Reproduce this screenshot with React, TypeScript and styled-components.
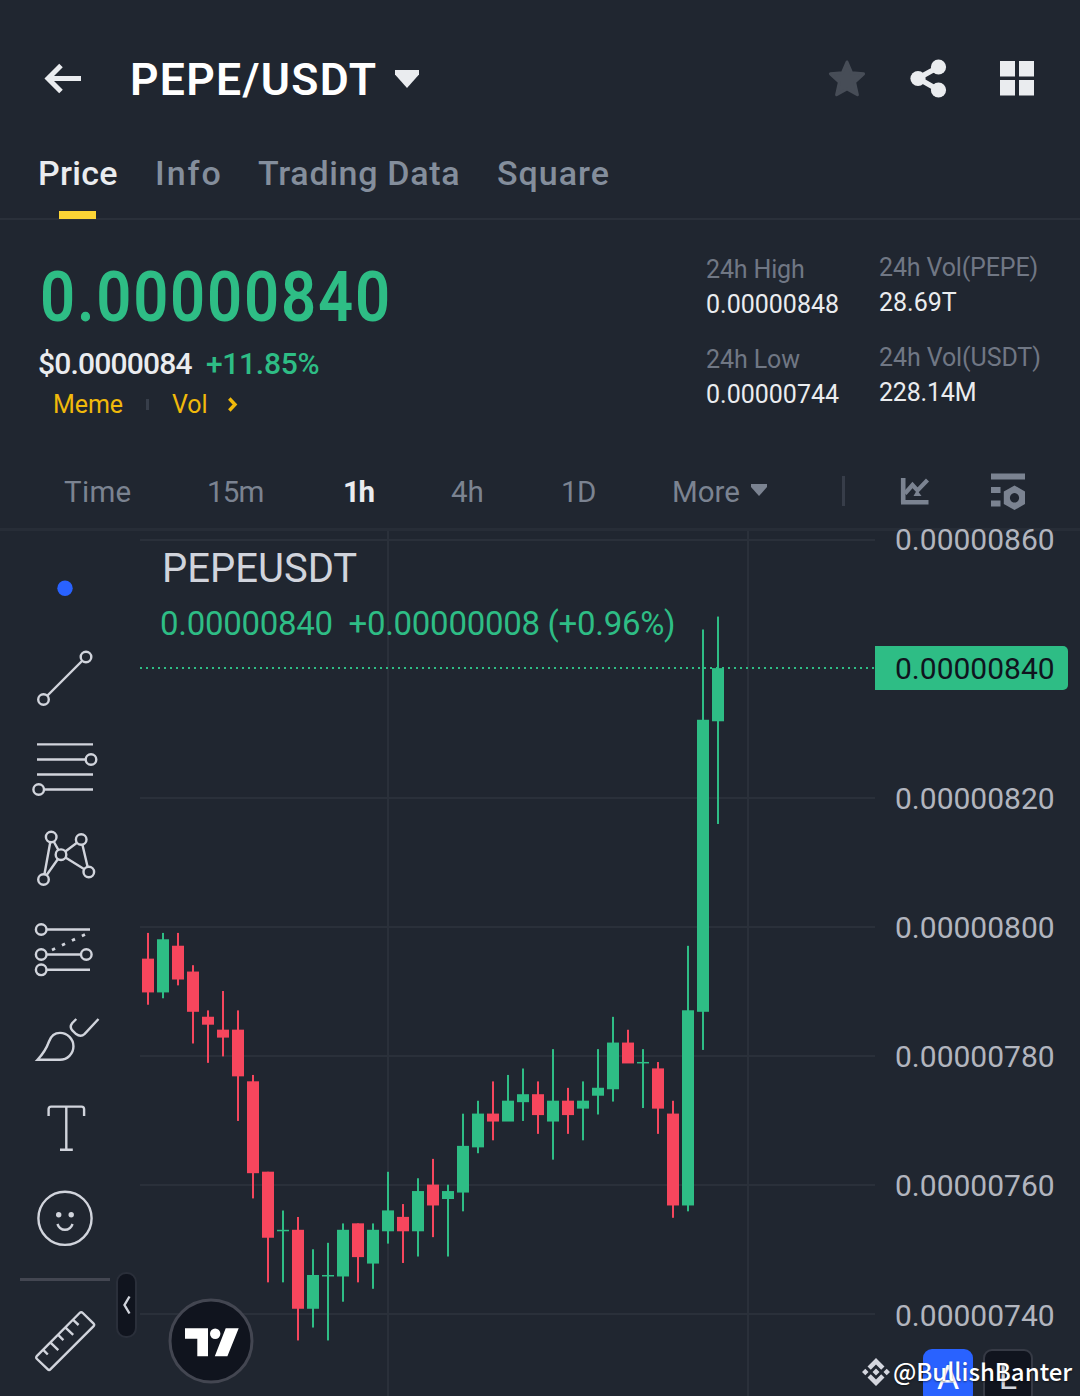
import React from "react";
import styled, { createGlobalStyle, css } from "styled-components";

const color = {
  bg: "#202630",
  text: "#eaecef",
  muted: "#7b8391",
  green: "#2ebd85",
  red: "#f6465d",
  yellow: "#f0b90b",
  line: "#2a303a",
  tool: "#d1d4dc",
};

const Global = createGlobalStyle`
  * { box-sizing: border-box; }
  body { margin: 0; background: ${color.bg}; overflow: hidden; }
`;

const Screen = styled.main`
  position: relative;
  width: 1080px;
  height: 1396px;
  overflow: hidden;
  background: ${color.bg};
  color: ${color.text};
  font-family: Roboto, "Liberation Sans", sans-serif;
  display: flex;
  flex-direction: column;
`;

type TextProps = {
  $size: number;
  $weight?: number;
  $color?: string;
  $spacing?: number;
  $stretch?: number;
};

const Text = styled.span<TextProps>`
  display: inline-block;
  white-space: pre;
  line-height: 1;
  transform-origin: 0 50%;
  font-size: ${(p) => p.$size}px;
  font-weight: ${(p) => p.$weight ?? 400};
  color: ${(p) => p.$color ?? color.text};
  letter-spacing: ${(p) => p.$spacing ?? 0}px;
  ${(p) => p.$stretch && css`transform: scaleX(${p.$stretch});`}
`;

const Header = styled.header`
  height: 131px;
  padding: 26px 45px 0 44px;
  display: flex;
  align-items: center;
`;

const Pair = styled.div`
  display: flex;
  width: 265px;
  padding-top: 3px;
  margin-left: 48px;
`;

const Actions = styled.div`
  display: flex;
  align-items: center;
  gap: 44px;
  margin-left: auto;
`;

const Tabs = styled.nav`
  height: 89px;
  padding-left: 38px;
  border-bottom: 2px solid ${color.line};
  display: grid;
  grid-template-columns: 117px 103px 239px 140px;
`;

const Tab = styled.div`
  position: relative;
  height: 87px;
  padding-bottom: 4px;
  display: flex;
  align-items: center;
`;

const Underline = styled.i`
  position: absolute;
  left: 21px;
  bottom: -1px;
  width: 37px;
  height: 8px;
  background: #fcd535;
`;

const Summary = styled.section`
  height: 235px;
  display: grid;
  grid-template-columns: 706px 173px 1fr;
`;

const Quote = styled.div`
  padding: 37px 0 0 38px;
`;

const BigPrice = styled.div`
  height: 80px;
  padding-left: 2px;
  display: flex;
  align-items: center;
`;

const SubPrice = styled.div`
  height: 54px;
  display: grid;
  grid-template-columns: 168px auto;
  align-items: center;
`;

const Tags = styled.div`
  height: 26px;
  padding-left: 15px;
  display: flex;
  align-items: center;
`;

const TagCell = styled.div<{ $width: number }>`
  width: ${(p) => p.$width}px;
  display: flex;
`;

const TagRule = styled.i`
  width: 3px;
  height: 11px;
  margin-right: 23px;
  background: #373e4a;
`;

const Stats = styled.div<{ $top: number }>`
  padding-top: ${(p) => p.$top}px;
`;

const Stat = styled.div`
  height: 90px;
`;

const StatLine = styled.div`
  height: 35px;
  display: flex;
  align-items: center;
`;

const Intervals = styled.nav`
  height: 76px;
  padding-left: 64px;
  display: grid;
  grid-template-columns: 143px 136px 108px 110px 111px 170px 58px 90px auto;
  align-items: center;
  border-bottom: 3px solid #272d37;
`;

const Interval = styled.div`
  padding-top: 3px;
  display: flex;
  align-items: center;
`;

const Caret = styled.svg`
  margin-left: 11px;
  margin-top: -6px;
`;

const Rule = styled.i`
  width: 3px;
  height: 30px;
  margin-top: -1px;
  background: #373d49;
`;

const Workspace = styled.section`
  position: relative;
  height: 865px;
  display: grid;
  grid-template-columns: 140px 735px 205px;
`;

const Toolbar = styled.aside`
  padding-top: 12px;
  display: flex;
  flex-direction: column;
`;

const ToolIcon = styled.svg`
  display: block;
  width: 130px;
  height: 90px;
  flex: none;
  fill: none;
  stroke: ${color.tool};
  stroke-width: 2.4;
`;

const ToolRule = styled.i`
  width: 90px;
  height: 3px;
  flex: none;
  margin: 15px 0 15px 20px;
  background: #434651;
`;

const CollapseHandle = styled.div`
  position: absolute;
  left: 116px;
  top: 741px;
  width: 21px;
  height: 66px;
  border: 2px solid #2a2f3a;
  border-radius: 10px;
  background: #10141e;
  display: grid;
  place-items: center;
`;

const Pane = styled.div`
  position: relative;
  height: 865px;
`;

const Plot = styled.svg`
  display: block;
`;

const Legend = styled.div`
  position: absolute;
  left: 20px;
  top: 11px;
`;

const LegendLine = styled.div<{ $indent?: number }>`
  height: 54.5px;
  padding-left: ${(p) => p.$indent ?? 0}px;
  display: flex;
  align-items: center;
`;

const Brand = styled.svg`
  position: absolute;
  left: 28px;
  top: 767px;
`;

const Axis = styled.div`
  display: flex;
  flex-direction: column;
`;

const AxisRow = styled.div`
  flex: none;
  height: 129.2px;
  display: flex;
  align-items: flex-start;
`;

const AxisLabel = styled.div<{ $current?: boolean }>`
  width: 193px;
  height: 44px;
  margin-top: ${(p) => (p.$current ? -14 : -12.6)}px;
  padding: ${(p) => (p.$current ? 1 : 0)}px 0 0 20px;
  display: flex;
  align-items: center;
  border-radius: 0 5px 5px 0;
  background: ${(p) => (p.$current ? color.green : "transparent")};
`;

const ScaleButton = styled.div<{ $x: number; $active?: boolean }>`
  position: absolute;
  left: ${(p) => p.$x}px;
  top: 818px;
  width: 50px;
  height: 54px;
  border-radius: 9px;
  border: ${(p) => (p.$active ? "0" : "2px solid #363a45")};
  background: ${(p) => (p.$active ? "#2962ff" : "#10141e")};
  display: flex;
  justify-content: center;
  padding-top: ${(p) => (p.$active ? 11 : 9)}px;
`;

const Watermark = styled.div`
  position: absolute;
  left: 862px;
  top: 1353px;
  height: 38px;
  display: flex;
  align-items: center;
  gap: 3px;
  color: #fff;
  white-space: nowrap;
  font: 500 24px/36px "Noto Sans CJK SC", "Noto Sans", sans-serif;
  text-shadow: 0 1px 2px rgba(0, 0, 0, 0.5);
`;

const Handle = styled.span`
  height: 38px;
  line-height: 36px;
`;

/* One row per hour: high, upper body, lower body, low, rising. */
const candles: [number, number, number, number, number][] = [
  [799, 795, 790, 788, 0], [799, 798, 790, 789, 1], [799, 797, 792, 791, 0],
  [794, 793, 787, 782, 0], [787, 786, 785, 779, 0], [790, 784, 783, 780, 0],
  [787, 784, 777, 770, 0], [777, 776, 762, 758, 0], [762, 762, 752, 745, 0],
  [756, 753, 753, 745, 1], [755, 753, 741, 736, 0], [750, 746, 741, 738, 1],
  [751, 746, 746, 736, 1], [754, 753, 746, 742, 1], [754, 754, 749, 745, 0],
  [754, 753, 748, 744, 1], [762, 756, 753, 751, 1], [757, 755, 753, 748, 0],
  [761, 759, 753, 749, 1], [764, 760, 757, 752, 0], [760, 759, 758, 749, 1],
  [771, 766, 759, 756, 1], [773, 771, 766, 765, 1], [776, 771, 770, 767, 0],
  [777, 773, 770, 770, 1], [778, 774, 773, 770, 1], [776, 774, 771, 768, 0],
  [781, 773, 770, 764, 1], [775, 773, 771, 768, 0], [776, 773, 772, 767, 1],
  [781, 775, 774, 771, 1], [786, 782, 775, 773, 1], [784, 782, 779, 779, 0],
  [781, 779, 779, 772, 1], [779, 778, 772, 768, 0], [773, 771, 757, 755, 0],
  [797, 787, 757, 756, 1], [846, 832, 787, 781, 1], [848, 840, 832, 816, 1],
];

const yOf = (p: number) => 8.5 + (860 - p) * 6.456;

function Chart() {
  return (
    <Plot width="735" height="865">
      {[860, 820, 800, 780, 760, 740].map((p) => (
        <rect key={p} x="0" y={Math.round(yOf(p)) - 1} width="735" height="2" fill={color.line} />
      ))}
      {[247, 607].map((x) => (
        <rect key={x} x={x} y="0" width="2" height="865" fill={color.line} />
      ))}
      <line x1="0" x2="735" y1="137" y2="137" stroke={color.green} strokeWidth="2" strokeDasharray="2 4" />
      {candles.map(([h, t, b, l, up], i) => {
        const x = 8 + i * 15;
        const top = yOf(t) - 0.5;
        return (
          <g key={i} fill={up ? color.green : color.red}>
            <rect x={x - 1} y={yOf(h) - 0.4} width="2" height={yOf(l) - yOf(h) + 0.8} />
            <rect x={x - 6} y={top} width="12" height={yOf(b) + 1 - top} />
          </g>
        );
      })}
    </Plot>
  );
}

function Ring({ x, y }: { x: number; y: number }) {
  return <circle cx={x} cy={y} r="5.3" fill={color.bg} />;
}

function Tools() {
  return (
    <Toolbar>
      <ToolIcon viewBox="0 0 130 90">
        <circle cx="65" cy="45.3" r="7.7" fill="#2962ff" stroke="none" />
      </ToolIcon>
      <ToolIcon viewBox="0 0 130 90">
        <path d="M43.5 66.5 86 24" />
        <Ring x={43.5} y={66.5} />
        <Ring x={86} y={24} />
      </ToolIcon>
      <ToolIcon viewBox="0 0 130 90">
        <path d="M37 21.4h56M37 36.5h54M37 51.5h56M39 66.5h54" />
        <Ring x={91} y={36.5} />
        <Ring x={38.7} y={66.5} />
      </ToolIcon>
      <ToolIcon viewBox="0 0 130 90">
        <path d="M51.2 24 43.5 66.5 61 41.7 51.2 24M61 41.7 81.2 26.5 88.8 59 61 41.7" />
        <Ring x={51.2} y={24} />
        <Ring x={81.2} y={26.5} />
        <Ring x={61} y={41.7} />
        <Ring x={43.5} y={66.5} />
        <Ring x={88.8} y={59} />
      </ToolIcon>
      <ToolIcon viewBox="0 0 130 90">
        <path d="M41 26.5h49M41 51.5h45M41 66.8h49" />
        <path d="M52 46.9 86 31" strokeDasharray="3.4 7.6" strokeWidth="2.8" />
        <Ring x={41.2} y={26.5} />
        <Ring x={41.2} y={51.5} />
        <Ring x={86.3} y={51.5} />
        <Ring x={41.2} y={66.8} />
      </ToolIcon>
      <ToolIcon viewBox="0 0 130 90">
        <path d="M37.5 66.8H60A13.4 13.4 0 0 0 60 39.9C53.5 39.9 50.8 43.5 49 48.5 46.5 55.5 41.5 62.5 37.5 66.8Z" />
        <path d="m76.3 26-4.2 4.2q-2.8 3.6.2 7.2l3.8 3.6q4.6 3.5 8.6-.2L98.5 26" />
      </ToolIcon>
      <ToolIcon viewBox="0 0 130 90">
        <path d="M48.6 33v-6.8q0-2.6 2.6-2.6h30.3q2.6 0 2.6 2.6V33M66.3 23.6v43M60 66.7h12.8" />
      </ToolIcon>
      <ToolIcon viewBox="0 0 130 90">
        <circle cx="65" cy="45.3" r="26.6" />
        <path d="M57.4 51q2.2 5.8 7.6 5.8t7.6-5.8" />
        <circle cx="58.7" cy="41.7" r="2.7" fill={color.tool} stroke="none" />
        <circle cx="71.2" cy="41.7" r="2.7" fill={color.tool} stroke="none" />
      </ToolIcon>
      <ToolRule />
      <ToolIcon viewBox="0 0 130 90">
        <path
          strokeLinejoin="round"
          d="M79.6 17q1.6-1.6 3.2 0l10.6 10.4q1.5 1.5 0 3L50.6 73.2q-1.5 1.5-3 0L37 63q-1.6-1.5 0-3.2ZM43.5 54.2l4.3 4.3M50.8 46.8l7.5 7.4M58.4 39.2l5 4.9M65.8 31.8l7.4 7M73.4 24.2l5.2 4.8"
        />
      </ToolIcon>
    </Toolbar>
  );
}

const levels = [860, 840, 820, 800, 780, 760, 740];

const Down = ({ w, h, fill }: { w: number; h: number; fill: string }) => (
  <svg width={w} height={h} viewBox="0 0 24 18" preserveAspectRatio="none">
    <path d="M0 0h24v4.6L12 18 0 4.6Z" fill={fill} />
  </svg>
);

const label = "#707784";

export default function App() {
  return (
    <Screen>
      <Global />
      <Header>
        <svg width="38" height="32" viewBox="0 0 38 32" fill="none" stroke={color.text}>
          <path d="M3.5 15.5H37" strokeWidth="5" />
          <path d="M17 2.6 4 15.5 17 28.6" strokeWidth="5" />
        </svg>
        <Pair>
          <Text $size={44.5} $weight={600} $color="#fff" $spacing={1.3}>PEPE/USDT</Text>
        </Pair>
        <Down w={24} h={18} fill={color.text} />
        <Actions>
          <svg width="38" height="39" viewBox="0 0 38 39">
            <path
              d="M19 3l4.6 10.8 12 1-9 8.4 2.8 12.6L19 30 8.600 35.800l2.800-12.600-9-8.400 12-1Z"
              fill="#474d57" stroke="#474d57" strokeWidth="3" strokeLinejoin="round"
            />
          </svg>
          <svg width="37" height="39" viewBox="0 0 37 39" fill={color.text}>
            <path d="M28.500 8 8 19.300l20.500 11.700" fill="none" stroke={color.text} strokeWidth="5.400" />
            <circle cx="28.500" cy="8" r="7.600" />
            <circle cx="8" cy="19.500" r="7.600" />
            <circle cx="28.500" cy="31" r="7.600" />
          </svg>
          <svg width="44" height="35" viewBox="-9 0 44 35" fill={color.text}>
            <path d="M0 0h15v15.500H0zM19 0h15v15.500H19zM0 19h15v15.500H0zM19 19h15v15.500H19z" />
          </svg>
        </Actions>
      </Header>

      <Tabs>
        <Tab>
          <Text $size={34} $weight={500} $spacing={0.3}>Price</Text>
          <Underline />
        </Tab>
        <Tab><Text $size={34} $weight={500} $color="#848e9c" $spacing={2}>Info</Text></Tab>
        <Tab><Text $size={34} $weight={500} $color="#848e9c" $spacing={0.7}>Trading Data</Text></Tab>
        <Tab><Text $size={34} $weight={500} $color="#848e9c" $spacing={1}>Square</Text></Tab>
      </Tabs>

      <Summary>
        <Quote>
          <BigPrice>
            <Text $size={70} $weight={600} $color={color.green} $spacing={2} $stretch={0.88}>0.00000840</Text>
          </BigPrice>
          <SubPrice>
            <Text $size={30} $weight={500} $spacing={-0.8}>$0.0000084</Text>
            <Text $size={30} $weight={500} $color={color.green} $spacing={-0.3}>+11.85%</Text>
          </SubPrice>
          <Tags>
            <TagCell $width={93}><Text $size={25} $color={color.yellow} $spacing={-0.1}>Meme</Text></TagCell>
            <TagRule />
            <TagCell $width={56}><Text $size={25} $color={color.yellow}>Vol</Text></TagCell>
            <svg width="10" height="15" viewBox="0 0 10 15" fill="none" stroke={color.yellow} strokeWidth="3.400">
              <path d="m1.300 1.500 5.700 6-5.700 6" />
            </svg>
          </Tags>
        </Quote>
        <Stats $top={32}>
          <Stat>
            <StatLine><Text $size={25} $color={label} $spacing={-0.15}>24h High</Text></StatLine>
            <StatLine><Text $size={25}>0.00000848</Text></StatLine>
          </Stat>
          <Stat>
            <StatLine><Text $size={25} $color={label} $spacing={-0.1}>24h Low</Text></StatLine>
            <StatLine><Text $size={25}>0.00000744</Text></StatLine>
          </Stat>
        </Stats>
        <Stats $top={30}>
          <Stat>
            <StatLine><Text $size={25} $color={label} $spacing={-0.15}>24h Vol(PEPE)</Text></StatLine>
            <StatLine><Text $size={25}>28.69T</Text></StatLine>
          </Stat>
          <Stat>
            <StatLine><Text $size={25} $color={label} $spacing={-0.1}>24h Vol(USDT)</Text></StatLine>
            <StatLine><Text $size={25} $spacing={-0.2}>228.14M</Text></StatLine>
          </Stat>
        </Stats>
      </Summary>

      <Intervals>
        <Interval><Text $size={29.5} $color={color.muted} $spacing={0.3}>Time</Text></Interval>
        <Interval><Text $size={29.5} $color={color.muted} $spacing={-0.8}>15m</Text></Interval>
        <Interval><Text $size={29.5} $weight={700} $spacing={-1.5}>1h</Text></Interval>
        <Interval><Text $size={29.5} $color={color.muted}>4h</Text></Interval>
        <Interval><Text $size={29.5} $color={color.muted} $spacing={-0.6}>1D</Text></Interval>
        <Interval>
          <Text $size={29.5} $color={color.muted}>More</Text>
          <Caret width="16" height="12" viewBox="0 0 24 18" preserveAspectRatio="none">
            <path d="M0 0h24v4.600L12 18 0 4.600Z" fill={color.muted} />
          </Caret>
        </Interval>
        <Rule />
        <svg width="30" height="30" viewBox="0 0 30 30" fill="none" stroke={color.muted}>
          <path d="M3.200 1v24.600M1 25.200h27.500" strokeWidth="4.600" />
          <path d="M5 16.500 12.500 8l5 5.500L27.500 3" strokeWidth="4.200" />
          <path d="M17 13l4.500 6h-8Z" fill={color.muted} stroke="none" />
        </svg>
        <svg width="36" height="37" viewBox="0 -0.500 36 37" fill={color.muted}>
          <path d="M1 0h34v6H1zM1 13.500h9.500v6H1zM1 27h9.500v6H1z" />
          <path fillRule="evenodd" d="M24.500 12 35 18v12.500L24.500 36.500 13.800 30.500V18ZM24.500 19.500a4.600 4.800 0 1 0 .01 0Z" />
        </svg>
      </Intervals>

      <Workspace>
        <Tools />
        <Pane>
          <Chart />
          <Legend>
            <LegendLine $indent={2}><Text $size={40} $color={color.tool}>PEPEUSDT</Text></LegendLine>
            <LegendLine>
              <Text $size={33} $color={color.green} $spacing={-0.29}>{"0.00000840  +0.00000008 (+0.96%)"}</Text>
            </LegendLine>
          </Legend>
          <Brand width="86" height="86" viewBox="0 0 86 86">
            <circle cx="43" cy="43" r="41" fill="#10141e" stroke="#434651" strokeWidth="3" />
            <path d="M17 30.300h23v28H29.300V40.700H17ZM57.700 30.300h13l-11.300 28H46.800Z" fill="#fff" />
            <circle cx="47.200" cy="35.800" r="5.200" fill="#fff" />
          </Brand>
        </Pane>
        <Axis>
          {levels.map((v) => (
            <AxisRow key={v}>
              <AxisLabel $current={v === 840}>
                <Text $size={30} $color={v === 840 ? "#10141e" : "#b2b5be"}>{`0.00000${v}`}</Text>
              </AxisLabel>
            </AxisRow>
          ))}
        </Axis>
        <CollapseHandle>
          <svg width="10" height="20" viewBox="0 0 10 20" fill="none" stroke={color.tool} strokeWidth="2.400">
            <path d="M7.500 1.500 2.500 10l5 8.500" />
          </svg>
        </CollapseHandle>
        <ScaleButton $x={923} $active><Text $size={34} $color="#fff">A</Text></ScaleButton>
        <ScaleButton $x={983}><Text $size={34} $color={color.tool}>L</Text></ScaleButton>
      </Workspace>

      <Watermark>
        <svg width="28" height="28" viewBox="0 0 28 28" fill="#d4d6de">
          <path d="m14 0 8.500 8.500-3.300 3.200L14 6.500l-5.200 5.200-3.300-3.200ZM14 28l8.500-8.500-3.300-3.200-5.200 5.200-5.200-5.200-3.300 3.200ZM3.300 10.800 6.500 14l-3.200 3.200L0 14ZM24.700 10.800 28 14l-3.300 3.200-3.200-3.200ZM14 10.500l3.500 3.500-3.500 3.500-3.500-3.500Z" />
        </svg>
        <Handle>@BullishBanter</Handle>
      </Watermark>
    </Screen>
  );
}
